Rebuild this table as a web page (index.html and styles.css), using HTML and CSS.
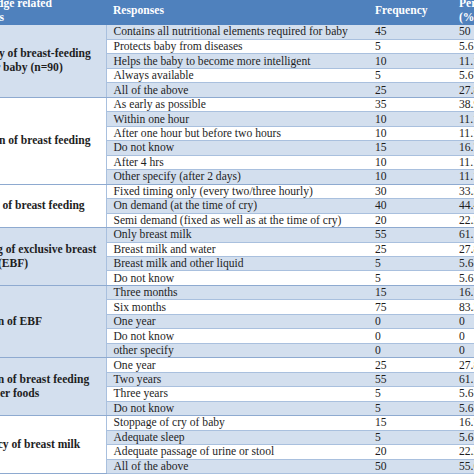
FILE: index.html
```html
<!DOCTYPE html>
<html lang="en">
<head>
  <meta charset="UTF-8" />
  <meta name="viewport" content="width=device-width, initial-scale=1" />
  <title>Knowledge of breast feeding</title>
  <link rel="stylesheet" href="styles.css">
</head>
<body>
  <table class="data-table">
    <colgroup>
      <col class="col-var" />
      <col class="col-resp" />
      <col class="col-freq" />
      <col class="col-pct" />
    </colgroup>
    <thead>
      <tr>
        <th>Knowledge related variables</th>
        <th>Responses</th>
        <th>Frequency</th>
        <th>Percentage<br />(%)</th>
      </tr>
    </thead>
    <tbody>
      <tr class="band">
        <td rowspan="5" class="group shaded">Necessity of breast-feeding for their baby (n=90)</td>
        <td class="resp">Contains all nutritional elements required for baby</td><td>45</td><td>50</td>
      </tr>
      <tr><td class="resp">Protects baby from diseases</td><td>5</td><td>5.6</td></tr>
      <tr class="band"><td class="resp">Helps the baby to become more intelligent</td><td>10</td><td>11.1</td></tr>
      <tr><td class="resp">Always available</td><td>5</td><td>5.6</td></tr>
      <tr class="band last"><td class="resp">All of the above</td><td>25</td><td>27.8</td></tr>

      <tr>
        <td rowspan="6" class="group">Initiation of breast feeding</td>
        <td class="resp">As early as possible</td><td>35</td><td>38.9</td>
      </tr>
      <tr class="band"><td class="resp">Within one hour</td><td>10</td><td>11.1</td></tr>
      <tr><td class="resp">After one hour but before two hours</td><td>10</td><td>11.1</td></tr>
      <tr class="band"><td class="resp">Do not know</td><td>15</td><td>16.7</td></tr>
      <tr><td class="resp">After 4 hrs</td><td>10</td><td>11.1</td></tr>
      <tr class="band last"><td class="resp">Other specify (after 2 days)</td><td>10</td><td>11.1</td></tr>

      <tr>
        <td rowspan="3" class="group">Practice of breast feeding</td>
        <td class="resp">Fixed timing only (every two/three hourly)</td><td>30</td><td>33.3</td>
      </tr>
      <tr class="band"><td class="resp">On demand (at the time of cry)</td><td>40</td><td>44.4</td></tr>
      <tr class="last"><td class="resp">Semi demand (fixed as well as at the time of cry)</td><td>20</td><td>22.2</td></tr>

      <tr class="band">
        <td rowspan="4" class="group shaded">Meaning of exclusive breast feeding (EBF)</td>
        <td class="resp">Only breast milk</td><td>55</td><td>61.1</td>
      </tr>
      <tr><td class="resp">Breast milk and water</td><td>25</td><td>27.8</td></tr>
      <tr class="band"><td class="resp">Breast milk and other liquid</td><td>5</td><td>5.6</td></tr>
      <tr class="last"><td class="resp">Do not know</td><td>5</td><td>5.6</td></tr>

      <tr class="band">
        <td rowspan="5" class="group shaded">Duration of EBF</td>
        <td class="resp">Three months</td><td>15</td><td>16.7</td>
      </tr>
      <tr><td class="resp">Six months</td><td>75</td><td>83.3</td></tr>
      <tr class="band"><td class="resp">One year</td><td>0</td><td>0</td></tr>
      <tr><td class="resp">Do not know</td><td>0</td><td>0</td></tr>
      <tr class="band last"><td class="resp">other specify</td><td>0</td><td>0</td></tr>

      <tr>
        <td rowspan="4" class="group shaded">Duration of breast feeding with other foods</td>
        <td class="resp">One year</td><td>25</td><td>27.8</td>
      </tr>
      <tr class="band"><td class="resp">Two years</td><td>55</td><td>61.1</td></tr>
      <tr><td class="resp">Three years</td><td>5</td><td>5.6</td></tr>
      <tr class="band last"><td class="resp">Do not know</td><td>5</td><td>5.6</td></tr>

      <tr>
        <td rowspan="4" class="group">Adequacy of breast milk</td>
        <td class="resp">Stoppage of cry of baby</td><td>15</td><td>16.7</td>
      </tr>
      <tr class="band"><td class="resp">Adequate sleep</td><td>5</td><td>5.6</td></tr>
      <tr><td class="resp">Adequate passage of urine or stool</td><td>20</td><td>22.2</td></tr>
      <tr class="band"><td class="resp">All of the above</td><td>50</td><td>55.6</td></tr>
    </tbody>
  </table>
</body>
</html>
```

FILE: styles.css
```css
* {
  margin: 0;
  padding: 0;
  box-sizing: border-box;
}
body {
  background-color: #ffffff;
  overflow: hidden;
  font-family: "Liberation Serif", "Times New Roman", serif;
  color: #1e1e1e;
}
.data-table {
  border-collapse: collapse;
  table-layout: fixed;
  width: 583px;
  margin-left: -48px;
  margin-top: -3px;
  font-size: 11.6px;
}
.col-var { width: 154px; }
.col-resp { width: 262px; }
.col-freq { width: 84px; }
.col-pct { width: 83px; }

.data-table th {
  background-color: #4f81bd;
  color: #ffffff;
  font-weight: bold;
  text-align: left;
  height: 28px;
  line-height: 14px;
  padding: 0 7px;
  vertical-align: middle;
}
.data-table td {
  height: 14.47px;
  line-height: 13px;
  padding: 0 7px;
  white-space: nowrap;
  border-bottom: 1px solid #a9c0de;
}
.data-table tr.band td {
  background-color: #d3dfee;
}
.data-table td.resp {
  border-left: 1px solid #a9c0de;
}
.data-table td.group {
  white-space: normal;
  font-weight: bold;
  line-height: 14px;
  vertical-align: middle;
  background-color: #ffffff;
  border-bottom: 1px solid #8eaad0;
}
.data-table tr.band td.group,
.data-table td.group.shaded {
  background-color: #d3dfee;
}
.data-table tr:not(.band) td.group:not(.shaded) {
  background-color: #ffffff;
}
.data-table tr.last td {
  border-bottom-color: #8eaad0;
}
```
